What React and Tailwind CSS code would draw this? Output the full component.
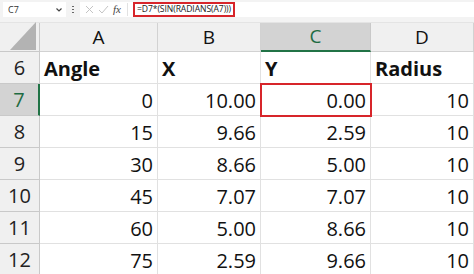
import React from "react";

const cols = ["A", "B", "C", "D"];
const rows = [
  { n: 6, cells: ["Angle", "X", "Y", "Radius"], head: true },
  { n: 7, cells: ["0", "10.00", "0.00", "10"] },
  { n: 8, cells: ["15", "9.66", "2.59", "10"] },
  { n: 9, cells: ["30", "8.66", "5.00", "10"] },
  { n: 10, cells: ["45", "7.07", "7.07", "10"] },
  { n: 11, cells: ["60", "5.00", "8.66", "10"] },
  { n: 12, cells: ["75", "2.59", "9.66", "10"] },
];

function FormulaBar() {
  return (
    <div className="h-[23px] bg-[#f3f3f3] flex items-start pt-[2px] border-b border-[#e4e4e4]">
      <div className="ml-[3px] w-[63px] h-[15px] bg-white flex items-center justify-between pl-[5px] pr-[4px]">
        <span className="text-[9px] text-[#333]">C7</span>
        <svg width="6" height="4" viewBox="0 0 6 4">
          <path d="M0.5 0.5 L3 3 L5.5 0.5" fill="none" stroke="#444" strokeWidth="1.2" />
        </svg>
      </div>
      <div className="w-[14px] h-[15px] flex flex-col items-center justify-center gap-[1.5px]">
        <span className="w-[1.5px] h-[1.5px] bg-[#555] rounded-full" />
        <span className="w-[1.5px] h-[1.5px] bg-[#555] rounded-full" />
        <span className="w-[1.5px] h-[1.5px] bg-[#555] rounded-full" />
      </div>
      <div className="flex-1 h-[15px] bg-white flex items-center">
        <svg width="9" height="9" viewBox="0 0 9 9" className="ml-[5px]">
          <path d="M1 1 L8 8 M8 1 L1 8" stroke="#c4c4c4" strokeWidth="1" />
        </svg>
        <svg width="11" height="9" viewBox="0 0 11 9" className="ml-[4px]">
          <path d="M1 5 L4 8 L10 1" fill="none" stroke="#c4c4c4" strokeWidth="1" />
        </svg>
        <span className="ml-[4px] text-[11px] italic text-[#444] font-['Liberation_Serif',serif] leading-none">
          fx
        </span>
        <div className="ml-[6px] w-px h-[13px] bg-[#e2e2e2]" />
        <div className="ml-[5px] h-[15px] border-2 border-[#d7252a] flex items-center px-[2px]">
          <span className="text-[8.6px] text-[#222] leading-none tracking-[-0.01em]">
            =D7*(SIN(RADIANS(A7)))
          </span>
        </div>
      </div>
    </div>
  );
}

export default function App() {
  return (
    <div className="w-[474px] h-[274px] overflow-hidden bg-white font-['Open_Sans',sans-serif]">
      <FormulaBar />
      <div className="grid grid-cols-[40px_118px_103px_110px_103px] grid-rows-[29px_repeat(7,32px)]">
        <div className="bg-[#f0f0f0] border-r border-b border-[#c9c9c9] flex items-end justify-end pr-[3px] pb-[1px]">
          <svg width="26" height="28" viewBox="0 0 26 28">
            <path d="M0 28 L26 28 L26 0 Z" fill="#b3b3b3" />
          </svg>
        </div>
        {cols.map((c) => (
          <div
            key={c}
            className={
              c === "C"
                ? "bg-[#d3d3d3] border-r border-[#c9c9c9] border-b-2 border-b-[#217346] flex items-center justify-center text-[19px] text-[#1e6b42]"
                : "bg-[#f0f0f0] border-r border-b border-[#d2d2d2] flex items-center justify-center text-[19px] text-[#111]"
            }
          >
            {c}
          </div>
        ))}
        {rows.map((r) => (
          <React.Fragment key={r.n}>
            <div
              className={
                r.n === 7
                  ? "bg-[#d3d3d3] border-r-2 border-r-[#217346] border-b border-[#c9c9c9] flex items-center justify-center text-[20px] text-[#1e6b42]"
                  : "bg-[#f0f0f0] border-r border-b border-[#c9c9c9] flex items-center justify-center text-[20px] text-[#222]"
              }
            >
              {r.n}
            </div>
            {r.cells.map((v, i) => (
              <div
                key={i}
                className={
                  (r.head
                    ? "justify-start pl-[4px] font-bold "
                    : "justify-end pr-[4px] ") +
                  (r.n === 7 && i === 2
                    ? "relative z-10 outline-2 outline-[#d7252a] -outline-offset-1 "
                    : "") +
                  "border-r border-b border-[#e1e1e1] flex items-center pt-[3px] text-[20px] text-[#111]"
                }
              >
                {v}
              </div>
            ))}
          </React.Fragment>
        ))}
      </div>
    </div>
  );
}
